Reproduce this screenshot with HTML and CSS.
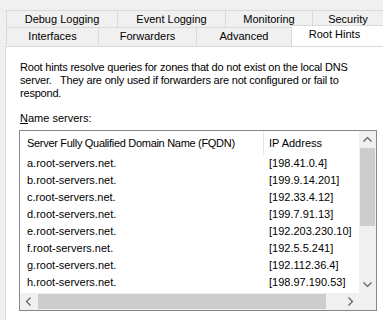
FILE: index.html
```html
<!DOCTYPE html>
<html>
<head>
<meta charset="utf-8">
<link rel="stylesheet" href="styles.css">
</head>
<body>
<div class="tabstrip">
  <div class="tabrow back">
    <div class="tab w-debug">Debug Logging</div>
    <div class="tab w-event">Event Logging</div>
    <div class="tab w-mon">Monitoring</div>
    <div class="tab w-rest">Security</div>
  </div>
  <div class="tabrow front">
    <div class="tab w-if">Interfaces</div>
    <div class="tab w-fw">Forwarders</div>
    <div class="tab w-adv">Advanced</div>
    <div class="tab w-rest selected">Root Hints</div>
  </div>
</div>
<div class="panel">
  <p class="desc">Root hints resolve queries for zones that do not exist on the local DNS<br>server. &nbsp; They are only used if forwarders are not configured or fail to<br>respond.</p>
  <div class="label"><u>N</u>ame servers:</div>
  <div class="listbox">
    <div class="listmain">
      <div class="lhead">
        <div class="c1 hsep">Server Fully Qualified Domain Name (FQDN)</div>
        <div class="c2">IP Address</div>
      </div>
      <div class="lrow"><div class="c1">a.root-servers.net.</div><div class="c2">[198.41.0.4]</div></div>
      <div class="lrow"><div class="c1">b.root-servers.net.</div><div class="c2">[199.9.14.201]</div></div>
      <div class="lrow"><div class="c1">c.root-servers.net.</div><div class="c2">[192.33.4.12]</div></div>
      <div class="lrow"><div class="c1">d.root-servers.net.</div><div class="c2">[199.7.91.13]</div></div>
      <div class="lrow"><div class="c1">e.root-servers.net.</div><div class="c2">[192.203.230.10]</div></div>
      <div class="lrow"><div class="c1">f.root-servers.net.</div><div class="c2">[192.5.5.241]</div></div>
      <div class="lrow"><div class="c1">g.root-servers.net.</div><div class="c2">[192.112.36.4]</div></div>
      <div class="lrow"><div class="c1">h.root-servers.net.</div><div class="c2">[198.97.190.53]</div></div>
    </div>
    <div class="vscroll">
      <div class="sbtn"><svg width="17" height="17" viewBox="0 0 17 17"><polyline points="4.5,10.5 8.5,6.5 12.5,10.5" fill="none" stroke="#606060" stroke-width="1.2"/></svg></div>
      <div class="vtrack"><div class="vthumb"></div></div>
      <div class="sbtn"><svg width="17" height="17" viewBox="0 0 17 17"><polyline points="4.5,6.5 8.5,10.5 12.5,6.5" fill="none" stroke="#606060" stroke-width="1.2"/></svg></div>
    </div>
    <div class="hscroll">
      <div class="sbtn"><svg width="17" height="17" viewBox="0 0 17 17"><polyline points="10.5,4.5 6.5,8.5 10.5,12.5" fill="none" stroke="#606060" stroke-width="1.2"/></svg></div>
      <div class="htrack"><div class="hthumb"></div></div>
      <div class="sbtn"><svg width="17" height="17" viewBox="0 0 17 17"><polyline points="6.5,4.5 10.5,8.5 6.5,12.5" fill="none" stroke="#606060" stroke-width="1.2"/></svg></div>
    </div>
    <div class="corner"></div>
  </div>
</div>
</body>
</html>
```
FILE: styles.css
```css
html, body {
  margin: 0;
  padding: 0;
}
body {
  background: #f0f0f0;
  font-family: "Liberation Sans", Arial, sans-serif;
  font-size: 11px;
  color: #000;
  width: 383px;
  height: 320px;
  overflow: hidden;
}
.tabstrip {
  padding-top: 10px;
  padding-left: 6px;
}
.tabrow {
  display: flex;
}
.tab {
  box-sizing: border-box;
  border-left: 1px solid #d9d9d9;
  border-top: 1px solid #d9d9d9;
  background: #f0f0f0;
  text-align: center;
  white-space: nowrap;
}
.back .tab {
  height: 17px;
  line-height: 16px;
}
.front .tab {
  height: 18px;
  line-height: 17px;
}
.w-debug { width: 111px; }
.w-event { width: 108px; }
.w-mon { width: 87px; }
.w-if { width: 92px; }
.w-fw { width: 98px; }
.w-adv { width: 95px; }
.w-rest { flex: 1; }
.front .tab.selected {
  position: relative;
  z-index: 1;
  background: #fff;
  margin-top: -2px;
  height: 21px;
  line-height: 16px;
  padding-right: 6px;
}
.panel {
  margin-left: 5px;
  height: 275px;
  box-sizing: border-box;
  background: #fff;
  border-left: 1px solid #d9d9d9;
  border-top: 1px solid #d9d9d9;
  padding: 14px 0 0 14px;
}
.desc {
  margin: 0;
  line-height: 13px;
  white-space: nowrap;
  letter-spacing: -0.2px;
}
.label {
  margin-top: 12px;
  line-height: 13px;
}
.listbox {
  margin-top: 5px;
  margin-left: -1px;
  width: 358px;
  height: 181px;
  box-sizing: border-box;
  border: 1px solid #828790;
  display: grid;
  grid-template-columns: 1fr 17px;
  grid-template-rows: 1fr 17px;
  background: #fff;
}
.listmain {
  overflow: hidden;
}
.lhead {
  display: flex;
  height: 24px;
  line-height: 24px;
}
.lhead .c1 {
  letter-spacing: -0.3px;
}
.lrow {
  display: flex;
  height: 17px;
  line-height: 17px;
}
.c1 {
  box-sizing: border-box;
  width: 244px;
  padding-left: 7px;
  white-space: nowrap;
}
.c2 {
  padding-left: 5px;
  white-space: nowrap;
}
.hsep {
  border-right: 1px solid #e5e5e5;
}
.vscroll {
  display: flex;
  flex-direction: column;
  background: #f0f0f0;
}
.sbtn {
  width: 17px;
  height: 17px;
  flex: none;
}
.sbtn svg {
  display: block;
}
.vtrack {
  flex: 1;
  padding: 0 1px;
}
.vthumb {
  height: 78px;
  background: #cdcdcd;
}
.hscroll {
  display: flex;
  background: #f0f0f0;
}
.htrack {
  flex: 1;
  padding: 1px 0 1px 1px;
}
.hthumb {
  width: 288px;
  height: 15px;
  background: #cdcdcd;
}
.corner {
  background: #f0f0f0;
}
```
